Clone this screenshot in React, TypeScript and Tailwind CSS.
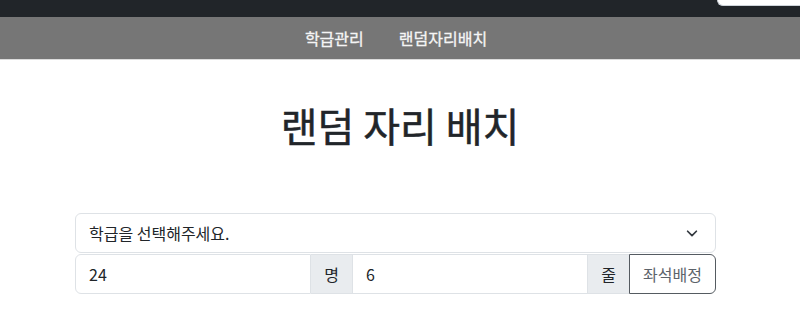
import React from 'react';

// 랜덤 자리 배치 — single page

const FONT = { fontFamily: '"Noto Sans CJK KR", "Noto Sans", sans-serif' };

function TopBar() {
  return (
    <div className="h-[17px] bg-[#212529] flex justify-end">
      <div className="w-[83px] h-[6px] bg-white border-l border-b border-[#ced4da] rounded-bl-[6px]" />
    </div>
  );
}

function NavBar() {
  return (
    <nav className="h-[43px] bg-[#767676] border-b border-[#dcdcdc] flex items-center justify-center gap-[35px] pr-[8px] text-[16px] text-[#f5f5f5] [-webkit-text-stroke:0.3px_#f5f5f5]">
      <span>학급관리</span>
      <span>랜덤자리배치</span>
    </nav>
  );
}

export default function App() {
  return (
    <div className="w-[800px] h-[334px] bg-white text-[#212529] overflow-hidden" style={FONT}>
      <TopBar />
      <NavBar />

      <h1 className="mt-[41px] text-center text-[40px] font-normal leading-[1.2] [-webkit-text-stroke:0.5px_#212529]">랜덤 자리 배치</h1>

      <div className="mt-[64px] mx-[75px] w-[641px] flex flex-col gap-px">
        {/* class select */}
        <div className="h-[40px] flex items-center justify-between px-[13px] border border-[#dee2e6] rounded-[6px] text-base">
          <span>학급을 선택해주세요.</span>
          <svg width="14" height="14" viewBox="0 0 16 16" className="mr-[3px]">
            <path d="M3 6l5 5 5-5" fill="none" stroke="#343a40" strokeWidth="2" strokeLinecap="round" strokeLinejoin="round" />
          </svg>
        </div>

        {/* input group */}
        <div className="h-[40px] flex text-base">
          <div className="flex-1 flex items-center px-[13px] border border-[#dee2e6] rounded-l-[6px]">24</div>
          <div className="w-[41px] flex items-center justify-center bg-[#e9ecef] border-y border-[#dee2e6]">명</div>
          <div className="flex-1 flex items-center px-[13px] border border-[#dee2e6]">6</div>
          <div className="w-[41px] flex items-center justify-center bg-[#e9ecef] border-y border-[#dee2e6]">줄</div>
          <button className="w-[87px] flex items-center justify-center border border-[#555b61] rounded-r-[6px] text-[#5c636a]">좌석배정</button>
        </div>
      </div>
    </div>
  );
}
